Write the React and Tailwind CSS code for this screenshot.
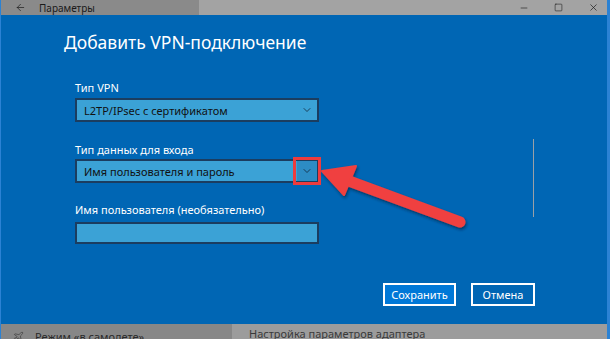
import React from 'react';
import { ArrowLeft, Minus, Square, X, ChevronDown, Plane } from 'lucide-react';

const font = { fontFamily: '"Noto Sans", "Open Sans", sans-serif' };

const Select = ({ value, highlighted }) => (
    <div className="flex h-[24px] w-[244px] items-center border-2 border-[#1b3d60] bg-[#3ba2d6]">
        <span className="flex-1 pl-[7px] text-[11px] leading-none text-[#111]">{value}</span>
        {highlighted ? (
            <div className="flex h-[20px] w-[20px] items-center justify-center bg-[#2d8cc4] outline-[3px] outline-[#ee3b3d] outline-offset-[1px]">
                <ChevronDown size={12} strokeWidth={1.5} className="text-[#123]" />
            </div>
        ) : (
            <div className="flex h-[20px] w-[20px] items-center justify-center">
                <ChevronDown size={12} strokeWidth={1.5} className="text-[#123]" />
            </div>
        )}
    </div>
);

const App = () => {
    return (
        <div className="relative flex h-[339px] w-[610px] flex-col overflow-hidden border-l border-r-[3px] border-[#2b82d4] bg-[#0066b4]" style={font}>
            {/* Title bar */}
            <div className="flex h-[15px] shrink-0 items-center">
                <div className="flex h-full w-[198px] items-center bg-[#8a8a8a] text-[#1a1a1a]">
                    <ArrowLeft size={11} strokeWidth={1.5} className="ml-[14px]" />
                    <span className="ml-[13px] text-[10px] leading-none">Параметры</span>
                </div>
                <div className="flex h-full flex-1 items-center justify-end bg-[#a3a3a3] text-[#1a1a1a]">
                    <Minus size={10} strokeWidth={1.5} className="mr-[25px]" />
                    <Square size={9} strokeWidth={1.5} className="mr-[25px]" />
                    <X size={11} strokeWidth={1.5} className="mr-[8px]" />
                </div>
            </div>

            {/* Dialog */}
            <div className="flex flex-1 flex-col pl-[63px] pt-[15px] text-white">
                <h1 className="h-[24px] text-[17.5px] leading-[24px] font-normal">Добавить VPN-подключение</h1>
                <div className="ml-[11px] flex flex-col">
                    <label className="mt-[26px] h-[16px] text-[11px] leading-[16px]">Тип VPN</label>
                    <div className="mt-[2px]">
                        <Select value="L2TP/IPsec с сертификатом" />
                    </div>
                    <label className="mt-[20px] h-[16px] text-[11px] leading-[16px]">Тип данных для входа</label>
                    <div className="mt-[1px]">
                        <Select value="Имя пользователя и пароль" highlighted />
                    </div>
                    <label className="mt-[19px] h-[16px] text-[11px] leading-[16px]">Имя пользователя (необязательно)</label>
                    <div className="mt-[4px] h-[22px] w-[244px] border-2 border-[#1b3d60] bg-[#3ba2d6]" />
                </div>
                <div className="mt-[39px] flex justify-end gap-[15px] pr-[72px]">
                    <button className="h-[23px] w-[73px] border-2 border-white bg-[#0078d7] text-[11px] leading-none text-white">Сохранить</button>
                    <button className="h-[23px] w-[64px] border-2 border-white bg-[#0066b4] text-[11px] leading-none text-white">Отмена</button>
                </div>
            </div>

            {/* Bottom bar */}
            <div className="flex h-[15px] shrink-0 overflow-hidden">
                <div className="flex h-full w-[231px] items-start bg-[#878787] pt-[7px] text-[#2a2a2a]">
                    <Plane size={11} strokeWidth={1.2} className="ml-[12px]" />
                    <span className="ml-[11px] text-[11px] leading-none">Режим «в самолете»</span>
                </div>
                <div className="flex h-full flex-1 items-start bg-[#9c9c9c] pt-[4px] text-[#3a3a3a]">
                    <span className="ml-[17px] text-[11px] leading-none">Настройка параметров адаптера</span>
                </div>
            </div>

            {/* Scroll indicator */}
            <div className="absolute left-[532px] top-[139px] h-[78px] w-px bg-[#9aa0a6]" />

            {/* Annotation arrow */}
            <svg className="pointer-events-none absolute left-0 top-0" width="610" height="339">
                <defs>
                    <filter id="sh" x="-20%" y="-20%" width="140%" height="140%">
                        <feDropShadow dx="1" dy="2" stdDeviation="1.5" floodColor="#001a33" floodOpacity="0.6" />
                    </filter>
                </defs>
                <g filter="url(#sh)" fill="#f0403f" stroke="#f0403f">
                    <line x1="348" y1="181" x2="459" y2="222" strokeWidth="11" strokeLinecap="round" />
                    <polygon points="321,171 355,166 343,195" strokeWidth="2" strokeLinejoin="round" />
                </g>
            </svg>
        </div>
    );
};

export default App;
